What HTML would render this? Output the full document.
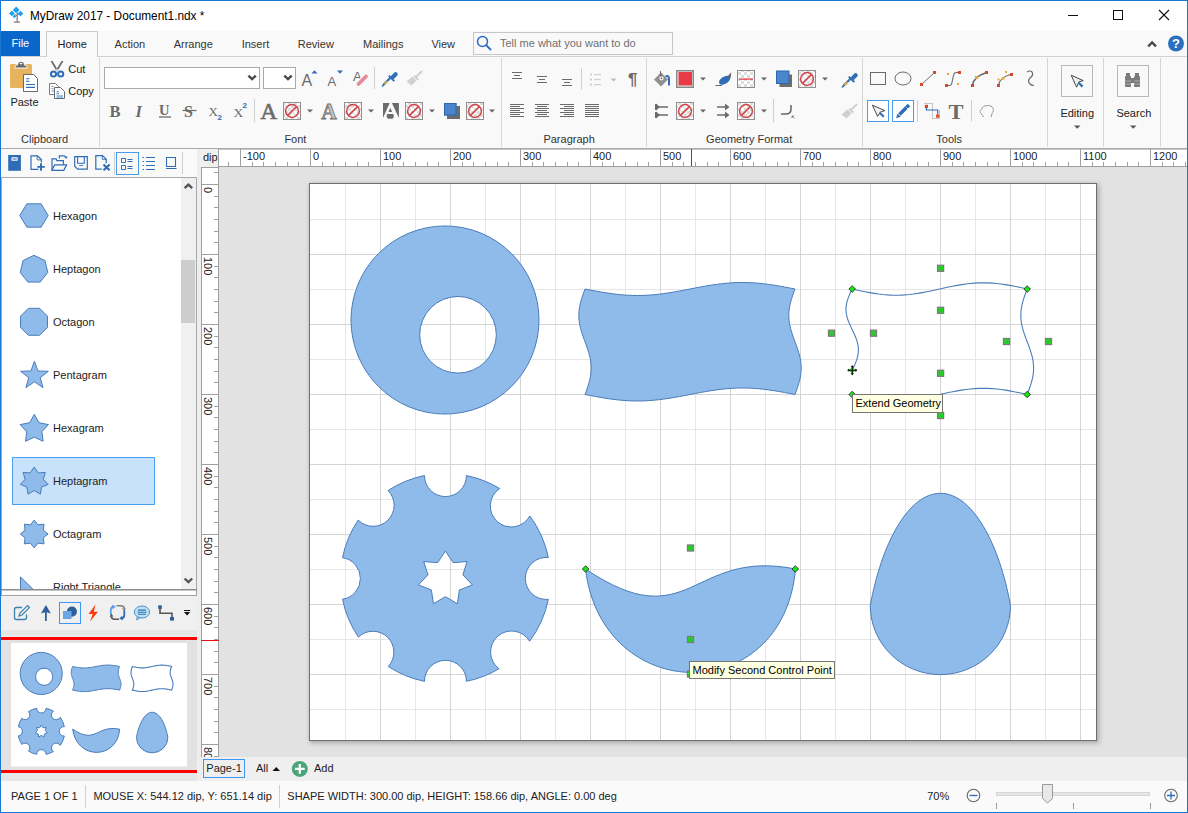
<!DOCTYPE html>
<html><head><meta charset="utf-8"><style>
html,body{margin:0;padding:0;width:1188px;height:813px;overflow:hidden;background:#fff}
svg{font-family:"Liberation Sans",sans-serif}
</style></head><body>
<svg width="1188" height="813" viewBox="0 0 1188 813" font-family="Liberation Sans, sans-serif" style="position:absolute;left:0;top:0">
<defs><filter id="sh" x="-5%" y="-5%" width="110%" height="110%"><feGaussianBlur stdDeviation="2.5"/></filter><pattern id="chk" width="6" height="6" patternUnits="userSpaceOnUse"><rect width="6" height="6" fill="#fff"/><rect width="3" height="3" fill="#ddd"/><rect x="3" y="3" width="3" height="3" fill="#ddd"/></pattern><clipPath id="listclip"><rect x="3" y="178" width="178" height="411"/></clipPath></defs>
<rect x="0" y="0" width="1188" height="813" fill="#f9f9f9" />
<rect x="0" y="0" width="1188" height="31" fill="#ffffff" />
<g><path d="M17.2 12.5 V22 M17.2 16 L14.5 14.5 M17.2 15 L19.5 13.5" stroke="#8a8a8a" stroke-width="1.4" fill="none"/><rect x="13.8" y="21.4" width="6.2" height="1.4" fill="#8a8a8a"/><path d="M16.2 6.5 l3.4 3.4 -3.4 3.4 -3.4 -3.4z" fill="#1ea0f0"/><path d="M11.9 10.6 l2.8 2.8 -2.8 2.8 -2.8 -2.8z" fill="#1ea0f0"/><path d="M20.5 10.8 l2.8 2.8 -2.8 2.8 -2.8 -2.8z" fill="#1ea0f0"/><path d="M14.4 14.8 l1.7 1.7 -1.7 1.7 -1.7 -1.7z" fill="#1ea0f0"/></g>
<text x="30" y="20" font-size="11.85" fill="#000" >MyDraw 2017 - Document1.ndx *</text>
<line x1="1068" y1="15.5" x2="1078" y2="15.5" stroke="#111" stroke-width="1"/>
<rect x="1113.5" y="10.5" width="9" height="9" fill="none" stroke="#111" stroke-width="1"/>
<path d="M1159 10 L1169 20 M1169 10 L1159 20" stroke="#111" stroke-width="1.1"/>
<rect x="1" y="31" width="1186" height="25" fill="#f9f9f9" />
<line x1="1" y1="56.5" x2="1187" y2="56.5" stroke="#d2d2d2" stroke-width="1" />
<rect x="1" y="31" width="39" height="25" fill="#0b66cc" />
<text x="11.5" y="47" font-size="11" fill="#fff" >File</text>
<path d="M46.5 57 V31.5 H97.5 V57" fill="#f9f9f9" stroke="#c9c9c9" stroke-width="1"/>
<text x="57.5" y="48" font-size="11" fill="#222" >Home</text>
<text x="114.6" y="48" font-size="11" fill="#333" >Action</text>
<text x="173.7" y="48" font-size="11" fill="#333" >Arrange</text>
<text x="241.7" y="48" font-size="11" fill="#333" >Insert</text>
<text x="297.8" y="48" font-size="11" fill="#333" >Review</text>
<text x="363.1" y="48" font-size="11" fill="#333" >Mailings</text>
<text x="431.4" y="48" font-size="11" fill="#333" >View</text>
<rect x="473.5" y="32.5" width="199" height="22" fill="#f9f9f9" stroke="#c6c6c6" stroke-width="1" />
<circle cx="482.5" cy="41.5" r="5" fill="none" stroke="#2b6cc0" stroke-width="1.5"/>
<line x1="486" y1="45" x2="491" y2="50" stroke="#2b6cc0" stroke-width="1.8"/>
<text x="500" y="47" font-size="11" fill="#707070" >Tell me what you want to do</text>
<path d="M1148.2 46.4 L1152.1 42.4 L1156 46.4" fill="none" stroke="#4a4a4a" stroke-width="2.4"/>
<circle cx="1176" cy="43.5" r="8" fill="#2a6fc0"/>
<text x="1176" y="48.3" font-size="13" font-weight="bold" fill="#fff" text-anchor="middle">?</text>
<rect x="1" y="57" width="1186" height="91" fill="#f9f9f9" />
<line x1="1" y1="148.5" x2="1187" y2="148.5" stroke="#a8a8a8" stroke-width="1" />
<line x1="99.5" y1="58" x2="99.5" y2="147" stroke="#d6d6d6" stroke-width="1" />
<line x1="501.5" y1="58" x2="501.5" y2="147" stroke="#d6d6d6" stroke-width="1" />
<line x1="646.5" y1="58" x2="646.5" y2="147" stroke="#d6d6d6" stroke-width="1" />
<line x1="862.5" y1="58" x2="862.5" y2="147" stroke="#d6d6d6" stroke-width="1" />
<line x1="1047.5" y1="58" x2="1047.5" y2="147" stroke="#d6d6d6" stroke-width="1" />
<line x1="1103.5" y1="58" x2="1103.5" y2="147" stroke="#d6d6d6" stroke-width="1" />
<line x1="1160.5" y1="58" x2="1160.5" y2="147" stroke="#d6d6d6" stroke-width="1" />
<text x="21" y="143" font-size="11" fill="#333" >Clipboard</text>
<text x="284.4" y="143" font-size="11" fill="#333" >Font</text>
<text x="543.4" y="143" font-size="11" fill="#333" >Paragraph</text>
<text x="706.1" y="143" font-size="11" fill="#333" >Geometry Format</text>
<text x="936.3" y="143" font-size="11" fill="#333" >Tools</text>
<rect x="10" y="64" width="22" height="24" rx="1.5" fill="#e8b35f"/>
<path d="M14 68.4 L15.8 64.6 H17.2 L18 61.8 Q21 60.2 24 61.8 L24.8 64.6 H26.2 L28 68.4z" fill="#f9f9f9"/>
<path d="M15 67.6 L16.4 65.4 H25.6 L27 67.6z M17.8 65.6 L18.7 62.5 Q21 61.2 23.3 62.5 L24.2 65.6z" fill="#6a6a6a"/>
<ellipse cx="21" cy="63.6" rx="1.3" ry="0.8" fill="#f9f9f9"/>
<path d="M23.5 74.5 h10 l4 4 v13 h-14z" fill="#fff" stroke="#6a6a6a" stroke-width="1"/>
<path d="M26 78.8 h3.5 M26 81.3 h3.5 M26 84.5 h9 M26 87.4 h9" stroke="#2f6db6" stroke-width="1.1"/>
<text x="10.4" y="105.5" font-size="11" fill="#222" >Paste</text>
<path d="M50.5 61 L52.5 61 L58 70 L56.5 71z M63.5 61 L61.5 61 L56 70 L57.5 71z" fill="#6a6a6a"/>
<circle cx="53.5" cy="74" r="2.6" fill="none" stroke="#2f6db6" stroke-width="2"/>
<circle cx="60.7" cy="74" r="2.6" fill="none" stroke="#2f6db6" stroke-width="2"/>
<text x="68.2" y="73" font-size="11" fill="#222" >Cut</text>
<path d="M49.5 83.5 h6 l3 3 v8 h-9z" fill="#fff" stroke="#7a7a7a" stroke-width="1"/>
<path d="M54.5 87.5 h6 l4 4 v7 h-10z" fill="#fff" stroke="#6a6a6a" stroke-width="1"/>
<path d="M56.5 91.8 h2.5 M56.5 93.8 h2.5 M56.5 96 h6.5 M56.5 98 h6.5" stroke="#2f6db6" stroke-width="0.9"/>
<path d="M51.5 86.5 h2 M51.5 88.7 h2 M51.5 91 h3" stroke="#3a78c4" stroke-width="0.8"/>
<text x="68.2" y="95" font-size="11" fill="#222" >Copy</text>
<rect x="104.5" y="67.5" width="155" height="21" fill="#fff" stroke="#a9a9a9" stroke-width="1" />
<path d="M248.4 75.6 l3.7 3.6 3.7 -3.6" fill="none" stroke="#4a4a4a" stroke-width="2.4"/>
<rect x="263.5" y="67.5" width="32" height="21" fill="#fff" stroke="#a9a9a9" stroke-width="1" />
<path d="M284.3 75.6 l3.7 3.6 3.7 -3.6" fill="none" stroke="#4a4a4a" stroke-width="2.4"/>
<text x="301.5" y="86" font-size="16" fill="#6b6b6b">A</text>
<path d="M311.5 73.5 l3 -3.2 3 3.2z" fill="#2f6db6"/>
<text x="327.5" y="86" font-size="13" fill="#6b6b6b">A</text>
<path d="M337 70.5 h6 l-3 3.3z" fill="#2f6db6"/>
<text x="353" y="80.7" font-size="13" fill="#6b6b6b">A</text>
<path d="M358.5 84 L366 76.5" stroke="#f9f9f9" stroke-width="6" stroke-linecap="round"/>
<path d="M358.5 84 L366 76.5" stroke="#e8899a" stroke-width="3.8" stroke-linecap="round"/>
<line x1="374.5" y1="67" x2="374.5" y2="89" stroke="#cfcfcf" stroke-width="1" />
<g transform="translate(381,70)"><path d="M9.6 6.4 L13.2 2.8 a2 2 0 0 1 2.9 2.9 L12.5 9.3z" fill="#2f6db6"/><path d="M7.8 5.6 L13.3 11.1" stroke="#2f6db6" stroke-width="2"/><path d="M9.6 8.3 L3.2 14.7 L1.2 16.2 L2.6 13.8 L9 7.4z" fill="#fff" stroke="#2f6db6" stroke-width="1.1" stroke-linejoin="round"/><path d="M3 13.6 L6 10.6 L7.4 12 L4.4 15z" fill="#e9b050"/></g>
<g transform="translate(406,70)"><path d="M15.5 1.5 L11 6" stroke="#d0d0d0" stroke-width="2" stroke-linecap="round"/><path d="M9 5 l4 4 -1.5 1.5 -4 -4z" fill="#d0d0d0"/><path d="M6.5 6.5 l4 4 -5 5 -5 -4 z" fill="#d0d0d0"/></g>
<text x="109.5" y="117" font-size="16.5" font-weight="bold" fill="#6b6b6b" font-family="Liberation Serif">B</text>
<text x="135.5" y="117" font-size="16.5" font-weight="bold" font-style="italic" fill="#6b6b6b" font-family="Liberation Serif">I</text>
<text x="159" y="115" font-size="14.5" font-weight="bold" fill="#6b6b6b" font-family="Liberation Serif">U</text>
<line x1="159" y1="117" x2="171" y2="117" stroke="#6b6b6b" stroke-width="1.3" />
<text x="184" y="117" font-size="16" font-weight="bold" fill="#6b6b6b" font-family="Liberation Serif">S</text>
<line x1="182.5" y1="110.5" x2="196.5" y2="110.5" stroke="#6b6b6b" stroke-width="1.2" />
<text x="208.5" y="115.5" font-size="13" fill="#6b6b6b" font-family="Liberation Serif">X</text>
<text x="217.5" y="119.5" font-size="8" font-weight="bold" fill="#2f6db6">2</text>
<text x="233.5" y="117" font-size="13.5" fill="#6b6b6b" font-family="Liberation Serif">X</text>
<text x="242.5" y="108" font-size="8" font-weight="bold" fill="#2f6db6">2</text>
<line x1="254.5" y1="99" x2="254.5" y2="122" stroke="#cfcfcf" stroke-width="1" />
<text x="260.3" y="119" font-size="23" fill="#6b6b6b" font-family="Liberation Serif" textLength="17" lengthAdjust="spacingAndGlyphs" stroke="#6b6b6b" stroke-width="0.6">A</text>
<text x="321.3" y="119" font-size="23" font-weight="bold" fill="#c4c4c4" stroke="#6b6b6b" stroke-width="0.8" font-family="Liberation Serif" textLength="15.5" lengthAdjust="spacingAndGlyphs">A</text>
<path d="M383 103 H389.7 L383 117.9z M391.9 103 H398.9 V117.9z M390.3 107.8 L388.4 111.9 H392.1z" fill="#6b6b6b"/>
<path d="M387 114 H393.3 L393.9 116.8 L392.6 118.7 H387.9 L386.6 116.8z" fill="#6b6b6b"/>
<rect x="447" y="106" width="13" height="13" fill="#6b6b6b"/>
<rect x="444" y="103" width="12.5" height="12.5" fill="#4a86cc"/>
<rect x="444.5" y="103.5" width="11.5" height="11.5" fill="none" stroke="#2d66ad" stroke-width="1"/>
<rect x="283.5" y="102.5" width="17" height="17" fill="url(#chk)" stroke="#909090"/>
<circle cx="292" cy="111" r="6.4" fill="none" stroke="#d0454b" stroke-width="1.5"/>
<line x1="287.6" y1="115.4" x2="296.4" y2="106.6" stroke="#d0454b" stroke-width="1.5"/>
<rect x="344.5" y="102.5" width="17" height="17" fill="url(#chk)" stroke="#909090"/>
<circle cx="353" cy="111" r="6.4" fill="none" stroke="#d0454b" stroke-width="1.5"/>
<line x1="348.6" y1="115.4" x2="357.4" y2="106.6" stroke="#d0454b" stroke-width="1.5"/>
<rect x="405.5" y="102.5" width="17" height="17" fill="url(#chk)" stroke="#909090"/>
<circle cx="414" cy="111" r="6.4" fill="none" stroke="#d0454b" stroke-width="1.5"/>
<line x1="409.6" y1="115.4" x2="418.4" y2="106.6" stroke="#d0454b" stroke-width="1.5"/>
<rect x="466.5" y="102.5" width="17" height="17" fill="url(#chk)" stroke="#909090"/>
<circle cx="475" cy="111" r="6.4" fill="none" stroke="#d0454b" stroke-width="1.5"/>
<line x1="470.6" y1="115.4" x2="479.4" y2="106.6" stroke="#d0454b" stroke-width="1.5"/>
<path d="M307 109.5 h6 l-3 3z" fill="#666"/>
<path d="M368 109.5 h6 l-3 3z" fill="#666"/>
<path d="M429 109.5 h6 l-3 3z" fill="#666"/>
<path d="M489 109.5 h6 l-3 3z" fill="#666"/>
<rect x="512" y="72" width="10" height="1" fill="#6b6b6b"/>
<rect x="514" y="75" width="6" height="1" fill="#6b6b6b"/>
<rect x="512" y="78" width="10" height="1" fill="#6b6b6b"/>
<rect x="537" y="76" width="10" height="1" fill="#6b6b6b"/>
<rect x="539" y="79" width="6" height="1" fill="#6b6b6b"/>
<rect x="537" y="82" width="10" height="1" fill="#6b6b6b"/>
<rect x="562" y="79" width="10" height="1" fill="#6b6b6b"/>
<rect x="564" y="82" width="6" height="1" fill="#6b6b6b"/>
<rect x="562" y="85" width="10" height="1" fill="#6b6b6b"/>
<line x1="581.5" y1="68" x2="581.5" y2="89.5" stroke="#cfcfcf" stroke-width="1" />
<rect x="590" y="73.5" width="2" height="2" fill="#d0d0d0"/>
<rect x="594" y="74" width="7" height="1.2" fill="#d0d0d0"/>
<rect x="590" y="78.5" width="2" height="2" fill="#d0d0d0"/>
<rect x="594" y="79" width="7" height="1.2" fill="#d0d0d0"/>
<rect x="590" y="83.5" width="2" height="2" fill="#d0d0d0"/>
<rect x="594" y="84" width="7" height="1.2" fill="#d0d0d0"/>
<path d="M610.5 78.5 h6 l-3 3z" fill="#bdbdbd"/>
<text x="628" y="85" font-size="17" font-weight="bold" fill="#6b6b6b">¶</text>
<rect x="510" y="104" width="14" height="1" fill="#6b6b6b"/>
<rect x="510" y="106" width="10" height="1" fill="#6b6b6b"/>
<rect x="510" y="108" width="14" height="1" fill="#6b6b6b"/>
<rect x="510" y="110" width="10" height="1" fill="#6b6b6b"/>
<rect x="510" y="112" width="14" height="1" fill="#6b6b6b"/>
<rect x="510" y="114" width="10" height="1" fill="#6b6b6b"/>
<rect x="510" y="116" width="14" height="1" fill="#6b6b6b"/>
<rect x="535" y="104" width="14" height="1" fill="#6b6b6b"/>
<rect x="537" y="106" width="10" height="1" fill="#6b6b6b"/>
<rect x="535" y="108" width="14" height="1" fill="#6b6b6b"/>
<rect x="537" y="110" width="10" height="1" fill="#6b6b6b"/>
<rect x="535" y="112" width="14" height="1" fill="#6b6b6b"/>
<rect x="537" y="114" width="10" height="1" fill="#6b6b6b"/>
<rect x="535" y="116" width="14" height="1" fill="#6b6b6b"/>
<rect x="560" y="104" width="14" height="1" fill="#6b6b6b"/>
<rect x="564" y="106" width="10" height="1" fill="#6b6b6b"/>
<rect x="560" y="108" width="14" height="1" fill="#6b6b6b"/>
<rect x="564" y="110" width="10" height="1" fill="#6b6b6b"/>
<rect x="560" y="112" width="14" height="1" fill="#6b6b6b"/>
<rect x="564" y="114" width="10" height="1" fill="#6b6b6b"/>
<rect x="560" y="116" width="14" height="1" fill="#6b6b6b"/>
<rect x="585" y="104" width="14" height="1" fill="#6b6b6b"/>
<rect x="585" y="106" width="14" height="1" fill="#6b6b6b"/>
<rect x="585" y="108" width="14" height="1" fill="#6b6b6b"/>
<rect x="585" y="110" width="14" height="1" fill="#6b6b6b"/>
<rect x="585" y="112" width="14" height="1" fill="#6b6b6b"/>
<rect x="585" y="114" width="14" height="1" fill="#6b6b6b"/>
<rect x="585" y="116" width="14" height="1" fill="#6b6b6b"/>
<path d="M654 79.5 L661 72.5 L668 79.5 L661 86.5z" fill="#8f8f8f"/>
<circle cx="661.5" cy="78.3" r="1.5" fill="#555" stroke="#fff" stroke-width="1.2"/>
<path d="M660.3 71 L661 76.5" stroke="#555" stroke-width="0.9"/>
<path d="M665.5 76.5 q3.5 -1.5 3.5 2.5 v6.5" fill="none" stroke="#2f6db6" stroke-width="2"/>
<rect x="676.75" y="70.75" width="16.5" height="16.5" fill="#f0f0f0" stroke="#888" stroke-width="1.5"/>
<rect x="678.5" y="72" width="13.5" height="13.5" fill="#e83a44"/>
<path d="M700 77.5 h6 l-3 3z" fill="#666"/>
<ellipse cx="724.6" cy="80.2" rx="6.2" ry="3.6" transform="rotate(-32 724.6 80.2)" fill="#2f6db6"/>
<path d="M727.5 76.5 L731.3 72.3 L730.6 78.2z" fill="#666"/>
<rect x="715.5" y="85" width="6.5" height="1" fill="#6b6b6b"/>
<rect x="737.5" y="70.5" width="17" height="17" fill="url(#chk)" stroke="#8a8a8a"/>
<rect x="739" y="78.5" width="14" height="1.3" fill="#e84148"/>
<path d="M761 77.5 h6 l-3 3z" fill="#666"/>
<rect x="779.5" y="74.5" width="12.5" height="12.5" fill="#6e6e6e"/>
<rect x="776.5" y="71" width="12.5" height="12.5" fill="#4a86cc" stroke="#2d66ad" stroke-width="1"/>
<rect x="798.5" y="70.5" width="17" height="17" fill="url(#chk)" stroke="#909090"/>
<circle cx="807" cy="79" r="6.4" fill="none" stroke="#d0454b" stroke-width="1.5"/>
<line x1="802.6" y1="83.4" x2="811.4" y2="74.6" stroke="#d0454b" stroke-width="1.5"/>
<path d="M822 77.5 h6 l-3 3z" fill="#666"/>
<g transform="translate(841,71)"><path d="M9.6 6.4 L13.2 2.8 a2 2 0 0 1 2.9 2.9 L12.5 9.3z" fill="#2f6db6"/><path d="M7.8 5.6 L13.3 11.1" stroke="#2f6db6" stroke-width="2"/><path d="M9.6 8.3 L3.2 14.7 L1.2 16.2 L2.6 13.8 L9 7.4z" fill="#fff" stroke="#2f6db6" stroke-width="1.1" stroke-linejoin="round"/><path d="M3 13.6 L6 10.6 L7.4 12 L4.4 15z" fill="#e9b050"/></g>
<path d="M656 104 v6 M656 112 v6" stroke="#6b6b6b" stroke-width="2"/>
<path d="M656 107 h12 M656 115 h12" stroke="#6b6b6b" stroke-width="1.5"/>
<path d="M656 103.5 l4 3.5 -4 3.5z M656 111.5 l4 3.5 -4 3.5z" fill="#6b6b6b"/>
<rect x="676.5" y="102.5" width="17" height="17" fill="url(#chk)" stroke="#909090"/>
<circle cx="685" cy="111" r="6.4" fill="none" stroke="#d0454b" stroke-width="1.5"/>
<line x1="680.6" y1="115.4" x2="689.4" y2="106.6" stroke="#d0454b" stroke-width="1.5"/>
<path d="M700 109.5 h6 l-3 3z" fill="#666"/>
<path d="M717 107 h11 M717 115 h11" stroke="#6b6b6b" stroke-width="1.5"/>
<path d="M725 103.5 l4.5 3.5 -4.5 3.5z M725 111.5 l4.5 3.5 -4.5 3.5z" fill="#6b6b6b"/>
<rect x="737.5" y="102.5" width="17" height="17" fill="url(#chk)" stroke="#909090"/>
<circle cx="746" cy="111" r="6.4" fill="none" stroke="#d0454b" stroke-width="1.5"/>
<line x1="741.6" y1="115.4" x2="750.4" y2="106.6" stroke="#d0454b" stroke-width="1.5"/>
<path d="M761 109.5 h6 l-3 3z" fill="#666"/>
<line x1="773.5" y1="99" x2="773.5" y2="122.5" stroke="#cfcfcf" stroke-width="1" />
<path d="M781 114 h5 q5 0 5 -5 v-4" fill="none" stroke="#6b6b6b" stroke-width="1.6"/>
<path d="M792 116 l2.5 2.5 M792 116 v2 M792 116 h2" stroke="#6b6b6b" stroke-width="0.8"/>
<g transform="translate(841,103)"><path d="M15.5 1.5 L11 6" stroke="#d0d0d0" stroke-width="2" stroke-linecap="round"/><path d="M9 5 l4 4 -1.5 1.5 -4 -4z" fill="#d0d0d0"/><path d="M6.5 6.5 l4 4 -5 5 -5 -4 z" fill="#d0d0d0"/></g>
<rect x="870.5" y="72.5" width="15" height="12" fill="none" stroke="#6b6b6b" stroke-width="1" />
<ellipse cx="903" cy="78.5" rx="8" ry="6.5" fill="none" stroke="#6b6b6b"/>
<path d="M921.5 84.5 L934 73" stroke="#6b6b6b" stroke-width="1"/>
<rect x="920" y="83" width="3" height="3" fill="#d24a2a"/><rect x="933" y="71" width="3" height="3" fill="#d24a2a"/>
<path d="M946.5 85.5 h3 q2 0 2.5 -3 l1.5 -7 q0.5 -3 3 -3 h3" fill="none" stroke="#6b6b6b" stroke-width="1.1"/>
<rect x="945" y="84" width="3" height="3" fill="#d24a2a"/><rect x="958" y="71" width="3" height="3" fill="#d24a2a"/>
<rect x="947" y="73" width="2" height="2" fill="#e8a838"/><rect x="957" y="83" width="2" height="2" fill="#e8a838"/>
<path d="M972.5 85.5 q1 -9 13 -12.5" fill="none" stroke="#6b6b6b" stroke-width="1.8"/>
<rect x="971" y="84" width="3" height="3" fill="#d24a2a"/><rect x="985" y="71" width="3" height="3" fill="#d24a2a"/>
<rect x="975" y="76" width="3" height="3" fill="#e8a838"/>
<path d="M998.5 85.5 q1 -8 12 -11" fill="none" stroke="#6b6b6b" stroke-width="1.2"/>
<rect x="997" y="84" width="3" height="3" fill="#d24a2a"/><rect x="1010" y="73" width="3" height="3" fill="#d24a2a"/>
<rect x="1002" y="77" width="2.6" height="2.6" fill="#e8a838"/><rect x="997.5" y="78.5" width="2" height="2" fill="#e8a838"/><rect x="1005" y="71" width="2" height="2" fill="#e8a838"/>
<path d="M1027 72 q3 -2 5 0 q2 3 -2 6 q-3 3 0 6 q2 2 4 1" fill="none" stroke="#6b6b6b" stroke-width="1.2"/>
<rect x="867.5" y="100.5" width="21" height="21" fill="#fff" stroke="#4a9bea" stroke-width="1" />
<rect x="892.5" y="100.5" width="21" height="21" fill="#fff" stroke="#4a9bea" stroke-width="1" />
<path d="M872.4 105.2 L884.9 110.6 L880.3 112 L877.6 116.4z" fill="#eef3f8" stroke="#333" stroke-width="0.9" stroke-linejoin="round"/>
<path d="M880 113 L883.8 116.8" stroke="#2f6db6" stroke-width="2.2"/>
<path d="M899.5 114.5 L909 105" stroke="#2f6db6" stroke-width="3.6"/>
<path d="M896 118.3 l1.6 -4.8 3.2 3.2z" fill="#2f6db6"/>
<path d="M906.5 107.5 l2 2" stroke="#fff" stroke-width="0.8"/>
<line x1="917.5" y1="100" x2="917.5" y2="121.5" stroke="#cfcfcf" stroke-width="1" />
<path d="M924.5 103.5 H932.5 V118.5 H939.5 V110" fill="none" stroke="#777" stroke-width="0.8" stroke-dasharray="1,1"/>
<path d="M926.4 107 V110 H937.7 V114.5" fill="none" stroke="#2f6db6" stroke-width="1.2"/>
<rect x="924.8" y="104.8" width="3.2" height="3.2" fill="#d24a2a"/><rect x="936.1" y="114.5" width="3.2" height="3.2" fill="#d24a2a"/>
<text x="948.6" y="119" font-size="22" font-weight="bold" fill="#6b6b6b" font-family="Liberation Serif" textLength="15" lengthAdjust="spacingAndGlyphs">T</text>
<line x1="971.5" y1="100" x2="971.5" y2="121.5" stroke="#cfcfcf" stroke-width="1" />
<path d="M983.5 117 L980.5 112.5 Q979.5 110.5 981.5 109.5 L983 106.8 Q984.5 105.3 986.5 106 Q988.5 104.8 990.3 106.2 Q992.5 106 993 108.5 Q994 111 992 113.5 L991.2 117" fill="none" stroke="#6b6b6b" stroke-width="0.9" stroke-dasharray="1.6,0.6"/>
<rect x="1061.5" y="65.5" width="31" height="31" fill="#f9f9f9" stroke="#b8b8b8" stroke-width="1" />
<path d="M1071.2 75.2 L1083.2 80.6 L1078.9 81.9 L1076.6 87.2z" fill="#eef3f8" stroke="#333" stroke-width="0.9" stroke-linejoin="round"/>
<path d="M1078.6 82.8 L1082.6 86.6" stroke="#2f6db6" stroke-width="2.2"/>
<text x="1060.4" y="117" font-size="11" fill="#222" >Editing</text>
<path d="M1074 125.5 h6.5 l-3.25 3.2z" fill="#555"/>
<rect x="1117.5" y="65.5" width="31" height="31" fill="#f9f9f9" stroke="#b8b8b8" stroke-width="1" />
<g fill="#7a7a7a"><rect x="1126" y="73" width="4" height="3"/><rect x="1135" y="73" width="4" height="3"/><rect x="1125" y="76" width="6" height="11" rx="1"/><rect x="1134" y="76" width="6" height="11" rx="1"/><rect x="1130" y="78" width="5" height="5"/></g><path d="M1125 81 h6 M1134 81 h6 M1125 84 h6 M1134 84 h6" stroke="#bbb" stroke-width="0.8"/>
<text x="1116.4" y="117" font-size="11" fill="#222" >Search</text>
<path d="M1130 125.5 h6.5 l-3.25 3.2z" fill="#555"/>
<rect x="197" y="149" width="990" height="608" fill="#e2e2e2" />
<rect x="197" y="149" width="4" height="608" fill="#eeeeee" />
<rect x="201" y="149" width="18" height="18" fill="#f0f0f0" />
<text x="203" y="161" font-size="11" fill="#222" >dip</text>
<rect x="219" y="149" width="968" height="17" fill="#fff" />
<line x1="219" y1="166.5" x2="1187" y2="166.5" stroke="#a0a0a0" stroke-width="1" />
<line x1="219" y1="149.5" x2="1187" y2="149.5" stroke="#c8c8c8" stroke-width="1" />
<line x1="218.5" y1="149" x2="218.5" y2="167" stroke="#a0a0a0" stroke-width="1" />
<line x1="228.5" y1="162" x2="228.5" y2="166" stroke="#a0a0a0" stroke-width="1" />
<line x1="240.5" y1="149" x2="240.5" y2="166" stroke="#a0a0a0" stroke-width="1" />
<text x="243" y="160" font-size="11" fill="#222" >-100</text>
<line x1="252.5" y1="162" x2="252.5" y2="166" stroke="#a0a0a0" stroke-width="1" />
<line x1="263.5" y1="162" x2="263.5" y2="166" stroke="#a0a0a0" stroke-width="1" />
<line x1="275.5" y1="162" x2="275.5" y2="166" stroke="#a0a0a0" stroke-width="1" />
<line x1="287.5" y1="162" x2="287.5" y2="166" stroke="#a0a0a0" stroke-width="1" />
<line x1="298.5" y1="162" x2="298.5" y2="166" stroke="#a0a0a0" stroke-width="1" />
<line x1="310.5" y1="149" x2="310.5" y2="166" stroke="#a0a0a0" stroke-width="1" />
<text x="313" y="160" font-size="11" fill="#222" >0</text>
<line x1="322.5" y1="162" x2="322.5" y2="166" stroke="#a0a0a0" stroke-width="1" />
<line x1="333.5" y1="162" x2="333.5" y2="166" stroke="#a0a0a0" stroke-width="1" />
<line x1="345.5" y1="162" x2="345.5" y2="166" stroke="#a0a0a0" stroke-width="1" />
<line x1="357.5" y1="162" x2="357.5" y2="166" stroke="#a0a0a0" stroke-width="1" />
<line x1="368.5" y1="162" x2="368.5" y2="166" stroke="#a0a0a0" stroke-width="1" />
<line x1="380.5" y1="149" x2="380.5" y2="166" stroke="#a0a0a0" stroke-width="1" />
<text x="383" y="160" font-size="11" fill="#222" >100</text>
<line x1="392.5" y1="162" x2="392.5" y2="166" stroke="#a0a0a0" stroke-width="1" />
<line x1="403.5" y1="162" x2="403.5" y2="166" stroke="#a0a0a0" stroke-width="1" />
<line x1="415.5" y1="162" x2="415.5" y2="166" stroke="#a0a0a0" stroke-width="1" />
<line x1="427.5" y1="162" x2="427.5" y2="166" stroke="#a0a0a0" stroke-width="1" />
<line x1="438.5" y1="162" x2="438.5" y2="166" stroke="#a0a0a0" stroke-width="1" />
<line x1="450.5" y1="149" x2="450.5" y2="166" stroke="#a0a0a0" stroke-width="1" />
<text x="453" y="160" font-size="11" fill="#222" >200</text>
<line x1="462.5" y1="162" x2="462.5" y2="166" stroke="#a0a0a0" stroke-width="1" />
<line x1="473.5" y1="162" x2="473.5" y2="166" stroke="#a0a0a0" stroke-width="1" />
<line x1="485.5" y1="162" x2="485.5" y2="166" stroke="#a0a0a0" stroke-width="1" />
<line x1="497.5" y1="162" x2="497.5" y2="166" stroke="#a0a0a0" stroke-width="1" />
<line x1="508.5" y1="162" x2="508.5" y2="166" stroke="#a0a0a0" stroke-width="1" />
<line x1="520.5" y1="149" x2="520.5" y2="166" stroke="#a0a0a0" stroke-width="1" />
<text x="523" y="160" font-size="11" fill="#222" >300</text>
<line x1="532.5" y1="162" x2="532.5" y2="166" stroke="#a0a0a0" stroke-width="1" />
<line x1="543.5" y1="162" x2="543.5" y2="166" stroke="#a0a0a0" stroke-width="1" />
<line x1="555.5" y1="162" x2="555.5" y2="166" stroke="#a0a0a0" stroke-width="1" />
<line x1="567.5" y1="162" x2="567.5" y2="166" stroke="#a0a0a0" stroke-width="1" />
<line x1="578.5" y1="162" x2="578.5" y2="166" stroke="#a0a0a0" stroke-width="1" />
<line x1="590.5" y1="149" x2="590.5" y2="166" stroke="#a0a0a0" stroke-width="1" />
<text x="593" y="160" font-size="11" fill="#222" >400</text>
<line x1="602.5" y1="162" x2="602.5" y2="166" stroke="#a0a0a0" stroke-width="1" />
<line x1="613.5" y1="162" x2="613.5" y2="166" stroke="#a0a0a0" stroke-width="1" />
<line x1="625.5" y1="162" x2="625.5" y2="166" stroke="#a0a0a0" stroke-width="1" />
<line x1="637.5" y1="162" x2="637.5" y2="166" stroke="#a0a0a0" stroke-width="1" />
<line x1="648.5" y1="162" x2="648.5" y2="166" stroke="#a0a0a0" stroke-width="1" />
<line x1="660.5" y1="149" x2="660.5" y2="166" stroke="#a0a0a0" stroke-width="1" />
<text x="663" y="160" font-size="11" fill="#222" >500</text>
<line x1="672.5" y1="162" x2="672.5" y2="166" stroke="#a0a0a0" stroke-width="1" />
<line x1="683.5" y1="162" x2="683.5" y2="166" stroke="#a0a0a0" stroke-width="1" />
<line x1="695.5" y1="162" x2="695.5" y2="166" stroke="#a0a0a0" stroke-width="1" />
<line x1="707.5" y1="162" x2="707.5" y2="166" stroke="#a0a0a0" stroke-width="1" />
<line x1="718.5" y1="162" x2="718.5" y2="166" stroke="#a0a0a0" stroke-width="1" />
<line x1="730.5" y1="149" x2="730.5" y2="166" stroke="#a0a0a0" stroke-width="1" />
<text x="733" y="160" font-size="11" fill="#222" >600</text>
<line x1="742.5" y1="162" x2="742.5" y2="166" stroke="#a0a0a0" stroke-width="1" />
<line x1="753.5" y1="162" x2="753.5" y2="166" stroke="#a0a0a0" stroke-width="1" />
<line x1="765.5" y1="162" x2="765.5" y2="166" stroke="#a0a0a0" stroke-width="1" />
<line x1="777.5" y1="162" x2="777.5" y2="166" stroke="#a0a0a0" stroke-width="1" />
<line x1="788.5" y1="162" x2="788.5" y2="166" stroke="#a0a0a0" stroke-width="1" />
<line x1="800.5" y1="149" x2="800.5" y2="166" stroke="#a0a0a0" stroke-width="1" />
<text x="803" y="160" font-size="11" fill="#222" >700</text>
<line x1="812.5" y1="162" x2="812.5" y2="166" stroke="#a0a0a0" stroke-width="1" />
<line x1="823.5" y1="162" x2="823.5" y2="166" stroke="#a0a0a0" stroke-width="1" />
<line x1="835.5" y1="162" x2="835.5" y2="166" stroke="#a0a0a0" stroke-width="1" />
<line x1="847.5" y1="162" x2="847.5" y2="166" stroke="#a0a0a0" stroke-width="1" />
<line x1="858.5" y1="162" x2="858.5" y2="166" stroke="#a0a0a0" stroke-width="1" />
<line x1="870.5" y1="149" x2="870.5" y2="166" stroke="#a0a0a0" stroke-width="1" />
<text x="873" y="160" font-size="11" fill="#222" >800</text>
<line x1="882.5" y1="162" x2="882.5" y2="166" stroke="#a0a0a0" stroke-width="1" />
<line x1="893.5" y1="162" x2="893.5" y2="166" stroke="#a0a0a0" stroke-width="1" />
<line x1="905.5" y1="162" x2="905.5" y2="166" stroke="#a0a0a0" stroke-width="1" />
<line x1="917.5" y1="162" x2="917.5" y2="166" stroke="#a0a0a0" stroke-width="1" />
<line x1="928.5" y1="162" x2="928.5" y2="166" stroke="#a0a0a0" stroke-width="1" />
<line x1="940.5" y1="149" x2="940.5" y2="166" stroke="#a0a0a0" stroke-width="1" />
<text x="943" y="160" font-size="11" fill="#222" >900</text>
<line x1="952.5" y1="162" x2="952.5" y2="166" stroke="#a0a0a0" stroke-width="1" />
<line x1="963.5" y1="162" x2="963.5" y2="166" stroke="#a0a0a0" stroke-width="1" />
<line x1="975.5" y1="162" x2="975.5" y2="166" stroke="#a0a0a0" stroke-width="1" />
<line x1="987.5" y1="162" x2="987.5" y2="166" stroke="#a0a0a0" stroke-width="1" />
<line x1="998.5" y1="162" x2="998.5" y2="166" stroke="#a0a0a0" stroke-width="1" />
<line x1="1010.5" y1="149" x2="1010.5" y2="166" stroke="#a0a0a0" stroke-width="1" />
<text x="1013" y="160" font-size="11" fill="#222" >1000</text>
<line x1="1022.5" y1="162" x2="1022.5" y2="166" stroke="#a0a0a0" stroke-width="1" />
<line x1="1033.5" y1="162" x2="1033.5" y2="166" stroke="#a0a0a0" stroke-width="1" />
<line x1="1045.5" y1="162" x2="1045.5" y2="166" stroke="#a0a0a0" stroke-width="1" />
<line x1="1057.5" y1="162" x2="1057.5" y2="166" stroke="#a0a0a0" stroke-width="1" />
<line x1="1068.5" y1="162" x2="1068.5" y2="166" stroke="#a0a0a0" stroke-width="1" />
<line x1="1080.5" y1="149" x2="1080.5" y2="166" stroke="#a0a0a0" stroke-width="1" />
<text x="1083" y="160" font-size="11" fill="#222" >1100</text>
<line x1="1092.5" y1="162" x2="1092.5" y2="166" stroke="#a0a0a0" stroke-width="1" />
<line x1="1103.5" y1="162" x2="1103.5" y2="166" stroke="#a0a0a0" stroke-width="1" />
<line x1="1115.5" y1="162" x2="1115.5" y2="166" stroke="#a0a0a0" stroke-width="1" />
<line x1="1127.5" y1="162" x2="1127.5" y2="166" stroke="#a0a0a0" stroke-width="1" />
<line x1="1138.5" y1="162" x2="1138.5" y2="166" stroke="#a0a0a0" stroke-width="1" />
<line x1="1150.5" y1="149" x2="1150.5" y2="166" stroke="#a0a0a0" stroke-width="1" />
<text x="1153" y="160" font-size="11" fill="#222" >1200</text>
<line x1="1162.5" y1="162" x2="1162.5" y2="166" stroke="#a0a0a0" stroke-width="1" />
<line x1="1173.5" y1="162" x2="1173.5" y2="166" stroke="#a0a0a0" stroke-width="1" />
<line x1="1185.5" y1="162" x2="1185.5" y2="166" stroke="#a0a0a0" stroke-width="1" />
<line x1="691.5" y1="149" x2="691.5" y2="166" stroke="#e81010" stroke-width="1" />
<rect x="201.5" y="167.5" width="17" height="600" fill="#fff" stroke="#a0a0a0" stroke-width="1" />
<line x1="214" y1="172.5" x2="218" y2="172.5" stroke="#a0a0a0" stroke-width="1" />
<line x1="201" y1="184.5" x2="219" y2="184.5" stroke="#a0a0a0" stroke-width="1" />
<text transform="translate(204,187) rotate(90)" font-size="11" fill="#222">0</text>
<line x1="214" y1="196.5" x2="218" y2="196.5" stroke="#a0a0a0" stroke-width="1" />
<line x1="214" y1="207.5" x2="218" y2="207.5" stroke="#a0a0a0" stroke-width="1" />
<line x1="214" y1="219.5" x2="218" y2="219.5" stroke="#a0a0a0" stroke-width="1" />
<line x1="214" y1="231.5" x2="218" y2="231.5" stroke="#a0a0a0" stroke-width="1" />
<line x1="214" y1="242.5" x2="218" y2="242.5" stroke="#a0a0a0" stroke-width="1" />
<line x1="201" y1="254.5" x2="219" y2="254.5" stroke="#a0a0a0" stroke-width="1" />
<text transform="translate(204,257) rotate(90)" font-size="11" fill="#222">100</text>
<line x1="214" y1="266.5" x2="218" y2="266.5" stroke="#a0a0a0" stroke-width="1" />
<line x1="214" y1="277.5" x2="218" y2="277.5" stroke="#a0a0a0" stroke-width="1" />
<line x1="214" y1="289.5" x2="218" y2="289.5" stroke="#a0a0a0" stroke-width="1" />
<line x1="214" y1="301.5" x2="218" y2="301.5" stroke="#a0a0a0" stroke-width="1" />
<line x1="214" y1="312.5" x2="218" y2="312.5" stroke="#a0a0a0" stroke-width="1" />
<line x1="201" y1="324.5" x2="219" y2="324.5" stroke="#a0a0a0" stroke-width="1" />
<text transform="translate(204,327) rotate(90)" font-size="11" fill="#222">200</text>
<line x1="214" y1="336.5" x2="218" y2="336.5" stroke="#a0a0a0" stroke-width="1" />
<line x1="214" y1="347.5" x2="218" y2="347.5" stroke="#a0a0a0" stroke-width="1" />
<line x1="214" y1="359.5" x2="218" y2="359.5" stroke="#a0a0a0" stroke-width="1" />
<line x1="214" y1="371.5" x2="218" y2="371.5" stroke="#a0a0a0" stroke-width="1" />
<line x1="214" y1="382.5" x2="218" y2="382.5" stroke="#a0a0a0" stroke-width="1" />
<line x1="201" y1="394.5" x2="219" y2="394.5" stroke="#a0a0a0" stroke-width="1" />
<text transform="translate(204,397) rotate(90)" font-size="11" fill="#222">300</text>
<line x1="214" y1="406.5" x2="218" y2="406.5" stroke="#a0a0a0" stroke-width="1" />
<line x1="214" y1="417.5" x2="218" y2="417.5" stroke="#a0a0a0" stroke-width="1" />
<line x1="214" y1="429.5" x2="218" y2="429.5" stroke="#a0a0a0" stroke-width="1" />
<line x1="214" y1="441.5" x2="218" y2="441.5" stroke="#a0a0a0" stroke-width="1" />
<line x1="214" y1="452.5" x2="218" y2="452.5" stroke="#a0a0a0" stroke-width="1" />
<line x1="201" y1="464.5" x2="219" y2="464.5" stroke="#a0a0a0" stroke-width="1" />
<text transform="translate(204,467) rotate(90)" font-size="11" fill="#222">400</text>
<line x1="214" y1="476.5" x2="218" y2="476.5" stroke="#a0a0a0" stroke-width="1" />
<line x1="214" y1="487.5" x2="218" y2="487.5" stroke="#a0a0a0" stroke-width="1" />
<line x1="214" y1="499.5" x2="218" y2="499.5" stroke="#a0a0a0" stroke-width="1" />
<line x1="214" y1="511.5" x2="218" y2="511.5" stroke="#a0a0a0" stroke-width="1" />
<line x1="214" y1="522.5" x2="218" y2="522.5" stroke="#a0a0a0" stroke-width="1" />
<line x1="201" y1="534.5" x2="219" y2="534.5" stroke="#a0a0a0" stroke-width="1" />
<text transform="translate(204,537) rotate(90)" font-size="11" fill="#222">500</text>
<line x1="214" y1="546.5" x2="218" y2="546.5" stroke="#a0a0a0" stroke-width="1" />
<line x1="214" y1="557.5" x2="218" y2="557.5" stroke="#a0a0a0" stroke-width="1" />
<line x1="214" y1="569.5" x2="218" y2="569.5" stroke="#a0a0a0" stroke-width="1" />
<line x1="214" y1="581.5" x2="218" y2="581.5" stroke="#a0a0a0" stroke-width="1" />
<line x1="214" y1="592.5" x2="218" y2="592.5" stroke="#a0a0a0" stroke-width="1" />
<line x1="201" y1="604.5" x2="219" y2="604.5" stroke="#a0a0a0" stroke-width="1" />
<text transform="translate(204,607) rotate(90)" font-size="11" fill="#222">600</text>
<line x1="214" y1="616.5" x2="218" y2="616.5" stroke="#a0a0a0" stroke-width="1" />
<line x1="214" y1="627.5" x2="218" y2="627.5" stroke="#a0a0a0" stroke-width="1" />
<line x1="214" y1="639.5" x2="218" y2="639.5" stroke="#a0a0a0" stroke-width="1" />
<line x1="214" y1="651.5" x2="218" y2="651.5" stroke="#a0a0a0" stroke-width="1" />
<line x1="214" y1="662.5" x2="218" y2="662.5" stroke="#a0a0a0" stroke-width="1" />
<line x1="201" y1="674.5" x2="219" y2="674.5" stroke="#a0a0a0" stroke-width="1" />
<text transform="translate(204,677) rotate(90)" font-size="11" fill="#222">700</text>
<line x1="214" y1="686.5" x2="218" y2="686.5" stroke="#a0a0a0" stroke-width="1" />
<line x1="214" y1="697.5" x2="218" y2="697.5" stroke="#a0a0a0" stroke-width="1" />
<line x1="214" y1="709.5" x2="218" y2="709.5" stroke="#a0a0a0" stroke-width="1" />
<line x1="214" y1="721.5" x2="218" y2="721.5" stroke="#a0a0a0" stroke-width="1" />
<line x1="214" y1="732.5" x2="218" y2="732.5" stroke="#a0a0a0" stroke-width="1" />
<line x1="201" y1="744.5" x2="219" y2="744.5" stroke="#a0a0a0" stroke-width="1" />
<text transform="translate(204,747) rotate(90)" font-size="11" fill="#222">800</text>
<line x1="214" y1="756.5" x2="218" y2="756.5" stroke="#a0a0a0" stroke-width="1" />
<line x1="201" y1="640.5" x2="219" y2="640.5" stroke="#e81010" stroke-width="1" />
<rect x="310" y="184" width="789" height="559" fill="#a0a0a0" filter="url(#sh)" opacity="0.9"/>
<rect x="309" y="183" width="788" height="558" fill="#fff" />
<path d="M345.5 184V740 M415.5 184V740 M485.5 184V740 M555.5 184V740 M625.5 184V740 M695.5 184V740 M765.5 184V740 M835.5 184V740 M905.5 184V740 M975.5 184V740 M1045.5 184V740 M310 219.5H1096 M310 289.5H1096 M310 359.5H1096 M310 429.5H1096 M310 499.5H1096 M310 569.5H1096 M310 639.5H1096 M310 709.5H1096" stroke="#e6e6e6" stroke-width="1"/>
<path d="M380.5 184V740 M450.5 184V740 M520.5 184V740 M590.5 184V740 M660.5 184V740 M730.5 184V740 M800.5 184V740 M870.5 184V740 M940.5 184V740 M1010.5 184V740 M1080.5 184V740 M310 254.5H1096 M310 324.5H1096 M310 394.5H1096 M310 464.5H1096 M310 534.5H1096 M310 604.5H1096 M310 674.5H1096" stroke="#d4d4d4" stroke-width="1"/>
<rect x="309.5" y="183.5" width="787" height="557" fill="none" stroke="#6e6e6e" stroke-width="1" />
<path d="M351 320 a94 94 0 1 0 188 0 a94 94 0 1 0 -188 0z M419.7 334.8 a38.3 38.3 0 1 0 76.6 0 a38.3 38.3 0 1 0 -76.6 0z" fill="#8fbbea" stroke="#4a7cba" stroke-width="1" fill-rule="evenodd"/>
<path d="M585.00 289.00L590.25 290.02L595.50 291.01L600.75 291.95L606.00 292.82L611.25 293.60L616.50 294.26L621.75 294.79L627.00 295.18L632.25 295.42L637.50 295.50L642.75 295.42L648.00 295.18L653.25 294.79L658.50 294.26L663.75 293.60L669.00 292.82L674.25 291.95L679.50 291.01L684.75 290.02L690.00 289.00L695.25 287.98L700.50 286.99L705.75 286.05L711.00 285.18L716.25 284.40L721.50 283.74L726.75 283.21L732.00 282.82L737.25 282.58L742.50 282.50L747.75 282.58L753.00 282.82L758.25 283.21L763.50 283.74L768.75 284.40L774.00 285.18L779.25 286.05L784.50 286.99L789.75 287.98L795.00 289.00L795.00 289.00L794.03 291.64L793.08 294.27L792.19 296.91L791.36 299.55L790.62 302.19L789.98 304.82L789.48 307.46L789.10 310.10L788.88 312.74L788.80 315.38L788.88 318.01L789.10 320.65L789.48 323.29L789.98 325.93L790.62 328.56L791.36 331.20L792.19 333.84L793.08 336.48L794.03 339.11L795.00 341.75L795.97 344.39L796.92 347.02L797.81 349.66L798.64 352.30L799.38 354.94L800.02 357.57L800.52 360.21L800.90 362.85L801.12 365.49L801.20 368.12L801.12 370.76L800.90 373.40L800.52 376.04L800.02 378.68L799.38 381.31L798.64 383.95L797.81 386.59L796.92 389.23L795.97 391.86L795.00 394.50L795.00 394.50L789.75 393.48L784.50 392.49L779.25 391.55L774.00 390.68L768.75 389.90L763.50 389.24L758.25 388.71L753.00 388.32L747.75 388.08L742.50 388.00L737.25 388.08L732.00 388.32L726.75 388.71L721.50 389.24L716.25 389.90L711.00 390.68L705.75 391.55L700.50 392.49L695.25 393.48L690.00 394.50L684.75 395.52L679.50 396.51L674.25 397.45L669.00 398.32L663.75 399.10L658.50 399.76L653.25 400.29L648.00 400.68L642.75 400.92L637.50 401.00L632.25 400.92L627.00 400.68L621.75 400.29L616.50 399.76L611.25 399.10L606.00 398.32L600.75 397.45L595.50 396.51L590.25 395.52L585.00 394.50L585.00 394.50L585.97 391.86L586.92 389.23L587.81 386.59L588.64 383.95L589.38 381.31L590.02 378.68L590.52 376.04L590.90 373.40L591.12 370.76L591.20 368.12L591.12 365.49L590.90 362.85L590.52 360.21L590.02 357.57L589.38 354.94L588.64 352.30L587.81 349.66L586.92 347.02L585.97 344.39L585.00 341.75L584.03 339.11L583.08 336.48L582.19 333.84L581.36 331.20L580.62 328.56L579.98 325.93L579.48 323.29L579.10 320.65L578.88 318.01L578.80 315.38L578.88 312.74L579.10 310.10L579.48 307.46L579.98 304.82L580.62 302.19L581.36 299.55L582.19 296.91L583.08 294.27L584.03 291.64L585.00 289.00z" fill="#8fbbea" stroke="#4a7cba" stroke-width="1"/>
<path d="M852.20 289.00L856.58 289.97L860.95 290.92L865.33 291.81L869.70 292.64L874.08 293.38L878.45 294.02L882.83 294.52L887.20 294.90L891.58 295.12L895.95 295.20L900.33 295.12L904.70 294.90L909.08 294.52L913.45 294.02L917.83 293.38L922.20 292.64L926.58 291.81L930.95 290.92L935.33 289.97L939.70 289.00L944.08 288.03L948.45 287.08L952.83 286.19L957.20 285.36L961.58 284.62L965.95 283.98L970.33 283.48L974.70 283.10L979.08 282.88L983.45 282.80L987.83 282.88L992.20 283.10L996.58 283.48L1000.95 283.98L1005.33 284.62L1009.70 285.36L1014.08 286.19L1018.45 287.08L1022.83 288.03L1027.20 289.00L1027.20 289.00L1026.20 291.64L1025.22 294.27L1024.29 296.91L1023.44 299.55L1022.67 302.19L1022.02 304.82L1021.50 307.46L1021.11 310.10L1020.88 312.74L1020.80 315.38L1020.88 318.01L1021.11 320.65L1021.50 323.29L1022.02 325.93L1022.67 328.56L1023.44 331.20L1024.29 333.84L1025.22 336.48L1026.20 339.11L1027.20 341.75L1028.20 344.39L1029.18 347.02L1030.11 349.66L1030.96 352.30L1031.73 354.94L1032.38 357.57L1032.90 360.21L1033.29 362.85L1033.52 365.49L1033.60 368.12L1033.52 370.76L1033.29 373.40L1032.90 376.04L1032.38 378.68L1031.73 381.31L1030.96 383.95L1030.11 386.59L1029.18 389.23L1028.20 391.86L1027.20 394.50L1027.20 394.50L1022.83 393.53L1018.45 392.58L1014.08 391.69L1009.70 390.86L1005.33 390.12L1000.95 389.48L996.58 388.98L992.20 388.60L987.83 388.38L983.45 388.30L979.08 388.38L974.70 388.60L970.33 388.98L965.95 389.48L961.58 390.12L957.20 390.86L952.83 391.69L948.45 392.58L944.08 393.53L939.70 394.50L935.33 395.47L930.95 396.42L926.58 397.31L922.20 398.14L917.83 398.88L913.45 399.52L909.08 400.02L904.70 400.40L900.33 400.62L895.95 400.70L891.58 400.62L887.20 400.40L882.83 400.02L878.45 399.52L874.08 398.88L869.70 398.14L865.33 397.31L860.95 396.42L856.58 395.47L852.20 394.50" fill="none" stroke="#4a7cba" stroke-width="1.1"/>
<path d="M852.20 289.00L851.23 291.03L850.28 293.06L849.39 295.10L848.56 297.13L847.82 299.16L847.18 301.19L846.68 303.23L846.30 305.26L846.08 307.29L846.00 309.32L846.08 311.36L846.30 313.39L846.68 315.42L847.18 317.45L847.82 319.49L848.56 321.52L849.39 323.55L850.28 325.58L851.23 327.62L852.20 329.65L853.17 331.68L854.12 333.71L855.01 335.75L855.84 337.78L856.58 339.81L857.22 341.84L857.72 343.88L858.10 345.91L858.32 347.94L858.40 349.98L858.32 352.01L858.10 354.04L857.72 356.07L857.22 358.11L856.58 360.14L855.84 362.17L855.01 364.20L854.12 366.24L853.17 368.27L852.20 370.30" fill="none" stroke="#4a7cba" stroke-width="1.1"/>
<path d="M424.45 475.57 A21.0 21.0 0 1 0 466.45 475.57 A105.0 105.0 0 0 1 499.66 488.52 A21.0 21.0 0 1 0 529.81 515.93 A105.0 105.0 0 0 1 548.35 557.55 A21.0 21.0 0 1 0 548.35 599.35 A105.0 105.0 0 0 1 529.62 641.22 A21.0 21.0 0 1 0 498.98 668.78 A105.0 105.0 0 0 1 466.45 681.33 A21.0 21.0 0 1 0 424.45 681.33 A105.0 105.0 0 0 1 388.27 666.51 A21.0 21.0 0 0 0 358.34 637.07 A105.0 105.0 0 0 1 342.52 599.22 A21.0 21.0 0 0 0 342.52 557.68 A105.0 105.0 0 0 1 358.17 520.07 A21.0 21.0 0 0 0 388.04 490.54 A105.0 105.0 0 0 1 424.45 475.57 Z M445.40 551.10 L453.17 562.67 L467.06 561.53 L462.85 574.82 L472.41 584.96 L459.39 589.96 L457.42 603.76 L445.40 596.70 L433.38 603.76 L431.41 589.96 L418.39 584.96 L427.95 574.82 L423.74 561.53 L437.63 562.67Z" fill="#8fbbea" stroke="#4a7cba" stroke-width="1" fill-rule="evenodd"/>
<path d="M585.5 569 C690.5 639.5 690.5 548 795.5 569 C783.3 708.1 602 705.9 585.5 569z" fill="#8fbbea" stroke="#4a7cba" stroke-width="1"/>
<path d="M940.4 493.3 C972.86 493.3 999.6 544.8 1010.5 605.6 A70.1 69 0 0 1 870.3 605.6 C881.2 544.8 907.94 493.3 940.4 493.3z" fill="#8fbbea" stroke="#4a7cba" stroke-width="1"/>
<rect x="937.6" y="265.3" width="6" height="6" fill="#20dd20" stroke="#7a7a7a" stroke-width="1.3"/>
<path d="M939.1 266.8 l3 3 M942.1 266.8 l-3 3" stroke="#3a9a3a" stroke-width="0.6"/>
<rect x="937.6" y="307.3" width="6" height="6" fill="#20dd20" stroke="#7a7a7a" stroke-width="1.3"/>
<path d="M939.1 308.8 l3 3 M942.1 308.8 l-3 3" stroke="#3a9a3a" stroke-width="0.6"/>
<rect x="828.5" y="330.2" width="6" height="6" fill="#20dd20" stroke="#7a7a7a" stroke-width="1.3"/>
<path d="M830.0 331.7 l3 3 M833.0 331.7 l-3 3" stroke="#3a9a3a" stroke-width="0.6"/>
<rect x="870.5" y="330.2" width="6" height="6" fill="#20dd20" stroke="#7a7a7a" stroke-width="1.3"/>
<path d="M872.0 331.7 l3 3 M875.0 331.7 l-3 3" stroke="#3a9a3a" stroke-width="0.6"/>
<rect x="1003.5" y="338.5" width="6" height="6" fill="#20dd20" stroke="#7a7a7a" stroke-width="1.3"/>
<path d="M1005.0 340.0 l3 3 M1008.0 340.0 l-3 3" stroke="#3a9a3a" stroke-width="0.6"/>
<rect x="1045.5" y="338.5" width="6" height="6" fill="#20dd20" stroke="#7a7a7a" stroke-width="1.3"/>
<path d="M1047.0 340.0 l3 3 M1050.0 340.0 l-3 3" stroke="#3a9a3a" stroke-width="0.6"/>
<rect x="937.6" y="370.3" width="6" height="6" fill="#20dd20" stroke="#7a7a7a" stroke-width="1.3"/>
<path d="M939.1 371.8 l3 3 M942.1 371.8 l-3 3" stroke="#3a9a3a" stroke-width="0.6"/>
<rect x="937.6" y="412.5" width="6" height="6" fill="#20dd20" stroke="#7a7a7a" stroke-width="1.3"/>
<path d="M939.1 414.0 l3 3 M942.1 414.0 l-3 3" stroke="#3a9a3a" stroke-width="0.6"/>
<path d="M852.2 285.7 L855.5 289 L852.2 292.3 L848.9000000000001 289z" fill="#14e614" stroke="#222" stroke-width="0.8"/>
<path d="M1027.2 285.7 L1030.5 289 L1027.2 292.3 L1023.9000000000001 289z" fill="#14e614" stroke="#222" stroke-width="0.8"/>
<path d="M852.2 391.2 L855.5 394.5 L852.2 397.8 L848.9000000000001 394.5z" fill="#14e614" stroke="#222" stroke-width="0.8"/>
<path d="M1027.2 391.2 L1030.5 394.5 L1027.2 397.8 L1023.9000000000001 394.5z" fill="#14e614" stroke="#222" stroke-width="0.8"/>
<path d="M852.3 367 L855.5 370.3 L852.3 373.6 L849 370.3z" fill="#14e614"/>
<path d="M852.3 365.8 V374.8 M847.8 370.3 H856.8" stroke="#111" stroke-width="1.1"/>
<path d="M852.3 365.3 l-1.8 2 h3.6z M852.3 375.3 l-1.8 -2 h3.6z M847.3 370.3 l2 -1.8 v3.6z M857.3 370.3 l-2 -1.8 v3.6z" fill="#111"/>
<rect x="687.5" y="545" width="6" height="6" fill="#20dd20" stroke="#7a7a7a" stroke-width="1.3"/>
<path d="M689.0 546.5 l3 3 M692.0 546.5 l-3 3" stroke="#3a9a3a" stroke-width="0.6"/>
<rect x="687.5" y="636.5" width="6" height="6" fill="#20dd20" stroke="#7a7a7a" stroke-width="1.3"/>
<path d="M689.0 638.0 l3 3 M692.0 638.0 l-3 3" stroke="#3a9a3a" stroke-width="0.6"/>
<rect x="687.5" y="671" width="6" height="6" fill="#20dd20" stroke="#7a7a7a" stroke-width="1.3"/>
<path d="M689.0 672.5 l3 3 M692.0 672.5 l-3 3" stroke="#3a9a3a" stroke-width="0.6"/>
<path d="M585.6 565.7 L588.9 569 L585.6 572.3 L582.3000000000001 569z" fill="#14e614" stroke="#222" stroke-width="0.8"/>
<path d="M795.3 565.7 L798.5999999999999 569 L795.3 572.3 L792.0 569z" fill="#14e614" stroke="#222" stroke-width="0.8"/>
<rect x="852.5" y="394.5" width="90" height="18" fill="#ffffe1" stroke="#767676" stroke-width="1" />
<text x="855.5" y="406.5" font-size="11" fill="#000" >Extend Geometry</text>
<rect x="689.5" y="661.5" width="145" height="17" fill="#ffffe1" stroke="#767676" stroke-width="1" />
<text x="692.5" y="674.2" font-size="11" fill="#000" >Modify Second Control Point</text>
<rect x="197" y="757" width="990" height="24" fill="#efefef" />
<rect x="203.5" y="759.5" width="41" height="18" fill="#efefef" stroke="#3d98f5" stroke-width="1" />
<text x="206.3" y="772" font-size="11" fill="#222" >Page-1</text>
<text x="256" y="772" font-size="11" fill="#222" >All</text>
<path d="M272.5 771 L276.25 767 L280 771z" fill="#111"/>
<circle cx="299.8" cy="768.9" r="8" fill="#4ca57a"/>
<path d="M299.8 764 V773.8 M294.9 768.9 H304.7" stroke="#fff" stroke-width="2.2"/>
<text x="314" y="772" font-size="11" fill="#222" >Add</text>
<rect x="1" y="149" width="196" height="632" fill="#f0f0f0" />
<rect x="1" y="149" width="196" height="28" fill="#f9f9f9" />
<rect x="8.2" y="155" width="12.7" height="15.8" fill="#2f6db6"/><rect x="11.4" y="157.3" width="6.3" height="3.4" rx="0.6" fill="#fff"/><rect x="12.4" y="158.3" width="4.3" height="1.4" fill="#5a8ac8"/>
<path d="M38.4 169.3 H31 V155.8 H37.6 L41.3 159.6 V162.5" fill="none" stroke="#2f6db6" stroke-width="1.2"/><path d="M37.2 155.8 V159.9 H41.3" fill="none" stroke="#2f6db6" stroke-width="0.9"/><path d="M37.3 166.9 H44.8 M41 163.2 V170.7" stroke="#2f6db6" stroke-width="1.9"/>
<path d="M52 170.3 V158.8 H56.2 L56.8 160.6 H63.4 V164.3" fill="none" stroke="#2f6db6" stroke-width="1.2"/><path d="M52 170.3 L54.6 164.9 H66.6 L63.8 170.3z" fill="none" stroke="#2f6db6" stroke-width="1.2"/><path d="M59.4 158.6 V155.8 H64.2 L66.3 157.8" fill="none" stroke="#2f6db6" stroke-width="1.2"/><path d="M67.2 158.6 L67 155.9 L64.5 157.9z" fill="#2f6db6"/>
<path d="M74.7 156.6 H87.3 V169.1 H77.6 L74.7 166.2z" fill="none" stroke="#2f6db6" stroke-width="1.2"/><path d="M77.6 156.6 V163.2 H84.3 V156.6" fill="none" stroke="#2f6db6" stroke-width="1.1"/><path d="M79.2 165.5 H82.9" stroke="#2f6db6" stroke-width="0.9"/>
<path d="M101.7 169.2 H95.8 V155.7 H102.6 L106.2 159.3 V163.3" fill="none" stroke="#2f6db6" stroke-width="1.2"/><path d="M102.3 155.7 V159.4 H106.2" fill="none" stroke="#2f6db6" stroke-width="0.9"/><path d="M103.5 164.4 L109.6 170.3 M109.6 164.4 L103.5 170.3" stroke="#2f6db6" stroke-width="2.1"/>
<line x1="114.5" y1="152" x2="114.5" y2="174" stroke="#cfcfcf" stroke-width="1" />
<rect x="116.5" y="152.5" width="22" height="22" fill="#f8f8f8" stroke="#4a9bea" stroke-width="1" />
<path d="M121.5 158.5 h4 v4 h-4z M121.5 165.5 h4 v4 h-4z" fill="none" stroke="#2f6db6" stroke-width="1"/><path d="M127.5 159.5 h5 M127.5 161.5 h5 M127.5 166.5 h5 M127.5 168.5 h5" stroke="#2f6db6" stroke-width="1"/>
<path d="M142.5 157.5 h1.5 M142.5 161.5 h1.5 M142.5 165.5 h1.5 M142.5 169.5 h1.5 M146 157.5 h9 M146 161.5 h9 M146 165.5 h9 M146 169.5 h9" stroke="#2f6db6" stroke-width="1.1"/>
<path d="M166.5 157.5 h9 v9 h-9z M166 168.5 h10.5" fill="none" stroke="#2f6db6" stroke-width="1.1"/>
<line x1="182.5" y1="152" x2="182.5" y2="174" stroke="#cfcfcf" stroke-width="1" />
<rect x="1.5" y="177.5" width="195" height="412" fill="#fff" stroke="#a8a8a8" stroke-width="1" />
<rect x="181" y="178" width="15" height="411" fill="#f0f0f0" />
<rect x="181" y="260" width="14" height="63" fill="#cdcdcd" />
<path d="M184.6 188.2 l3.8 -3.6 3.8 3.6" fill="none" stroke="#555" stroke-width="2.3"/>
<path d="M184.6 578.5 l3.8 3.6 3.8 -3.6" fill="none" stroke="#555" stroke-width="2.3"/>
<g clip-path="url(#listclip)">
<rect x="12.5" y="457.5" width="142" height="47" fill="#c8e2fb" stroke="#4aa0ee" stroke-width="1" />
<polygon points="48.20,215.50 41.10,227.18 26.90,227.18 19.80,215.50 26.90,203.82 41.10,203.82" fill="#8fbbea" stroke="#4a7cba" stroke-width="1"/>
<polygon points="34.00,255.30 45.02,260.61 47.75,272.54 40.12,282.10 27.88,282.10 20.25,272.54 22.98,260.61" fill="#8fbbea" stroke="#4a7cba" stroke-width="1"/>
<polygon points="39.59,308.31 47.49,316.21 47.49,327.39 39.59,335.29 28.41,335.29 20.51,327.39 20.51,316.21 28.41,308.31" fill="#8fbbea" stroke="#4a7cba" stroke-width="1"/>
<polygon points="34.45,361.20 37.98,370.95 48.34,371.29 40.16,377.65 43.03,387.61 34.45,381.80 25.87,387.61 28.74,377.65 20.56,371.29 30.92,370.95" fill="#8fbbea" stroke="#4a7cba" stroke-width="1"/>
<polygon points="34.30,414.30 39.00,422.73 48.47,424.60 41.91,431.67 43.06,441.25 34.30,437.20 25.54,441.25 26.69,431.67 20.13,424.60 29.60,422.73" fill="#8fbbea" stroke="#4a7cba" stroke-width="1"/>
<polygon points="34.20,467.05 38.24,472.92 45.34,472.42 43.27,479.23 48.09,484.47 41.47,487.10 40.38,494.14 34.20,490.60 28.02,494.14 26.93,487.10 20.31,484.47 25.13,479.23 23.06,472.42 30.16,472.92" fill="#8fbbea" stroke="#4a7cba" stroke-width="1"/>
<polygon points="34.20,520.10 37.99,524.85 44.03,524.17 43.35,530.21 48.10,534.00 43.35,537.79 44.03,543.83 37.99,543.15 34.20,547.90 30.41,543.15 24.37,543.83 25.05,537.79 20.30,534.00 25.05,530.21 24.37,524.17 30.41,524.85" fill="#8fbbea" stroke="#4a7cba" stroke-width="1"/>
<path d="M20.5 577 V600 H44z" fill="#8fbbea" stroke="#4a7cba"/>
<text x="53" y="220" font-size="11" fill="#222" >Hexagon</text>
<text x="53" y="273" font-size="11" fill="#222" >Heptagon</text>
<text x="53" y="326" font-size="11" fill="#222" >Octagon</text>
<text x="53" y="379" font-size="11" fill="#222" >Pentagram</text>
<text x="53" y="432" font-size="11" fill="#222" >Hexagram</text>
<text x="53" y="485" font-size="11" fill="#222" >Heptagram</text>
<text x="53" y="538" font-size="11" fill="#222" >Octagram</text>
<text x="53" y="591" font-size="11" fill="#222" >Right Triangle</text>
</g>
<rect x="1.5" y="589.5" width="195" height="6" fill="#fff" stroke="#a0a0a0" stroke-width="1" />
<line x1="1" y1="589.8" x2="197" y2="589.8" stroke="#8c8c8c" stroke-width="1.6" />
<path d="M22 607.5 h-5.5 q-2 0 -2 2 v8 q0 2 2 2 h8 q2 0 2 -2 v-3" fill="none" stroke="#3a82b0" stroke-width="1.3"/><path d="M19 616 l1 -3 7.5 -7.5 2 2 -7.5 7.5z" fill="none" stroke="#3a82b0" stroke-width="1.2"/>
<path d="M45.9 621 V610" stroke="#30609c" stroke-width="1.8"/><path d="M40.9 613.5 l5 -8.5 5 8.5 -5 -1.5z" fill="#30609c"/>
<rect x="59.5" y="602.5" width="21" height="21" fill="#f0f0f0" stroke="#3d98f5" stroke-width="1" />
<circle cx="71.9" cy="611.6" r="5.1" fill="#30609c"/><rect x="63" y="611" width="8.5" height="8" fill="#6aa6e6"/>
<path d="M95.5 604.5 l-7 9.5 h4.2 l-2.7 7.5 8 -9.8 h-4.2z" fill="#ff3a10"/>
<path d="M110.8 614.5 V610 q0 -3 3 -3.5" fill="none" stroke="#5aa0e8" stroke-width="1.8"/><path d="M112 604.8 l3.8 1.8 -3 2.6z" fill="#5aa0e8"/>
<path d="M116.5 605.8 h4.5 q2.5 0 3.2 2.2" fill="none" stroke="#808080" stroke-width="1.6"/><path d="M122 608.5 l3.8 -0.5 -1.4 3.5z" fill="#808080"/>
<path d="M124.3 610.5 V615 q0 3 -3 3.5" fill="none" stroke="#2f6db6" stroke-width="1.8"/><path d="M123 620.2 l-3.8 -1.8 3 -2.6z" fill="#2f6db6"/>
<path d="M119 619.2 h-4.5 q-2.5 0 -3.2 -2.2" fill="none" stroke="#555" stroke-width="1.6"/><path d="M113.5 616.5 l-3.8 0.5 1.4 -3.5z" fill="#555"/>
<ellipse cx="142" cy="612" rx="7.6" ry="6" fill="#bfe0f6" stroke="#4a90c8" stroke-width="1"/><path d="M137 617 l-0.5 3 3.5 -2z" fill="#bfe0f6" stroke="#4a90c8" stroke-width="0.8"/>
<path d="M138 610.1 h8 M137.5 612.2 h9 M138 614.3 h8" stroke="#2a78b0" stroke-width="1.1"/>
<path d="M160 607 V613.3 H172 V618.5" fill="none" stroke="#555" stroke-width="1.6"/><rect x="158.2" y="605.3" width="3.6" height="3.6" fill="#2f5f9c"/><rect x="170" y="617" width="4" height="3.6" fill="#2f5f9c"/>
<path d="M184 612 h6.2 l-3.1 3.4z" fill="#111"/><rect x="184" y="610" width="6.2" height="1" fill="#111"/>
<rect x="1" y="630" width="196" height="6" fill="#e6e6e6" />
<rect x="1" y="637" width="196" height="3" fill="#ff0000" />
<rect x="1" y="640" width="196" height="130" fill="#e2e2e2" />
<rect x="11" y="643" width="176" height="123.5" fill="#fff" />
<g transform="translate(11,643) scale(0.2239) translate(-310,-184)">
<path d="M351 320 a94 94 0 1 0 188 0 a94 94 0 1 0 -188 0z M419.7 334.8 a38.3 38.3 0 1 0 76.6 0 a38.3 38.3 0 1 0 -76.6 0z" fill="#8fbbea" stroke="#4a7cba" vector-effect="non-scaling-stroke" stroke-width="1" fill-rule="evenodd"/>
<path d="M585.00 289.00L590.25 290.02L595.50 291.01L600.75 291.95L606.00 292.82L611.25 293.60L616.50 294.26L621.75 294.79L627.00 295.18L632.25 295.42L637.50 295.50L642.75 295.42L648.00 295.18L653.25 294.79L658.50 294.26L663.75 293.60L669.00 292.82L674.25 291.95L679.50 291.01L684.75 290.02L690.00 289.00L695.25 287.98L700.50 286.99L705.75 286.05L711.00 285.18L716.25 284.40L721.50 283.74L726.75 283.21L732.00 282.82L737.25 282.58L742.50 282.50L747.75 282.58L753.00 282.82L758.25 283.21L763.50 283.74L768.75 284.40L774.00 285.18L779.25 286.05L784.50 286.99L789.75 287.98L795.00 289.00L795.00 289.00L794.03 291.64L793.08 294.27L792.19 296.91L791.36 299.55L790.62 302.19L789.98 304.82L789.48 307.46L789.10 310.10L788.88 312.74L788.80 315.38L788.88 318.01L789.10 320.65L789.48 323.29L789.98 325.93L790.62 328.56L791.36 331.20L792.19 333.84L793.08 336.48L794.03 339.11L795.00 341.75L795.97 344.39L796.92 347.02L797.81 349.66L798.64 352.30L799.38 354.94L800.02 357.57L800.52 360.21L800.90 362.85L801.12 365.49L801.20 368.12L801.12 370.76L800.90 373.40L800.52 376.04L800.02 378.68L799.38 381.31L798.64 383.95L797.81 386.59L796.92 389.23L795.97 391.86L795.00 394.50L795.00 394.50L789.75 393.48L784.50 392.49L779.25 391.55L774.00 390.68L768.75 389.90L763.50 389.24L758.25 388.71L753.00 388.32L747.75 388.08L742.50 388.00L737.25 388.08L732.00 388.32L726.75 388.71L721.50 389.24L716.25 389.90L711.00 390.68L705.75 391.55L700.50 392.49L695.25 393.48L690.00 394.50L684.75 395.52L679.50 396.51L674.25 397.45L669.00 398.32L663.75 399.10L658.50 399.76L653.25 400.29L648.00 400.68L642.75 400.92L637.50 401.00L632.25 400.92L627.00 400.68L621.75 400.29L616.50 399.76L611.25 399.10L606.00 398.32L600.75 397.45L595.50 396.51L590.25 395.52L585.00 394.50L585.00 394.50L585.97 391.86L586.92 389.23L587.81 386.59L588.64 383.95L589.38 381.31L590.02 378.68L590.52 376.04L590.90 373.40L591.12 370.76L591.20 368.12L591.12 365.49L590.90 362.85L590.52 360.21L590.02 357.57L589.38 354.94L588.64 352.30L587.81 349.66L586.92 347.02L585.97 344.39L585.00 341.75L584.03 339.11L583.08 336.48L582.19 333.84L581.36 331.20L580.62 328.56L579.98 325.93L579.48 323.29L579.10 320.65L578.88 318.01L578.80 315.38L578.88 312.74L579.10 310.10L579.48 307.46L579.98 304.82L580.62 302.19L581.36 299.55L582.19 296.91L583.08 294.27L584.03 291.64L585.00 289.00z" fill="#8fbbea" stroke="#4a7cba" vector-effect="non-scaling-stroke" stroke-width="1"/>
<path d="M852.20 289.00L856.58 289.97L860.95 290.92L865.33 291.81L869.70 292.64L874.08 293.38L878.45 294.02L882.83 294.52L887.20 294.90L891.58 295.12L895.95 295.20L900.33 295.12L904.70 294.90L909.08 294.52L913.45 294.02L917.83 293.38L922.20 292.64L926.58 291.81L930.95 290.92L935.33 289.97L939.70 289.00L944.08 288.03L948.45 287.08L952.83 286.19L957.20 285.36L961.58 284.62L965.95 283.98L970.33 283.48L974.70 283.10L979.08 282.88L983.45 282.80L987.83 282.88L992.20 283.10L996.58 283.48L1000.95 283.98L1005.33 284.62L1009.70 285.36L1014.08 286.19L1018.45 287.08L1022.83 288.03L1027.20 289.00L1027.20 289.00L1026.20 291.64L1025.22 294.27L1024.29 296.91L1023.44 299.55L1022.67 302.19L1022.02 304.82L1021.50 307.46L1021.11 310.10L1020.88 312.74L1020.80 315.38L1020.88 318.01L1021.11 320.65L1021.50 323.29L1022.02 325.93L1022.67 328.56L1023.44 331.20L1024.29 333.84L1025.22 336.48L1026.20 339.11L1027.20 341.75L1028.20 344.39L1029.18 347.02L1030.11 349.66L1030.96 352.30L1031.73 354.94L1032.38 357.57L1032.90 360.21L1033.29 362.85L1033.52 365.49L1033.60 368.12L1033.52 370.76L1033.29 373.40L1032.90 376.04L1032.38 378.68L1031.73 381.31L1030.96 383.95L1030.11 386.59L1029.18 389.23L1028.20 391.86L1027.20 394.50L1027.20 394.50L1022.83 393.53L1018.45 392.58L1014.08 391.69L1009.70 390.86L1005.33 390.12L1000.95 389.48L996.58 388.98L992.20 388.60L987.83 388.38L983.45 388.30L979.08 388.38L974.70 388.60L970.33 388.98L965.95 389.48L961.58 390.12L957.20 390.86L952.83 391.69L948.45 392.58L944.08 393.53L939.70 394.50L935.33 395.47L930.95 396.42L926.58 397.31L922.20 398.14L917.83 398.88L913.45 399.52L909.08 400.02L904.70 400.40L900.33 400.62L895.95 400.70L891.58 400.62L887.20 400.40L882.83 400.02L878.45 399.52L874.08 398.88L869.70 398.14L865.33 397.31L860.95 396.42L856.58 395.47L852.20 394.50L852.20 394.50L853.17 391.86L854.12 389.23L855.01 386.59L855.84 383.95L856.58 381.31L857.22 378.68L857.72 376.04L858.10 373.40L858.32 370.76L858.40 368.12L858.32 365.49L858.10 362.85L857.72 360.21L857.22 357.57L856.58 354.94L855.84 352.30L855.01 349.66L854.12 347.02L853.17 344.39L852.20 341.75L851.23 339.11L850.28 336.48L849.39 333.84L848.56 331.20L847.82 328.56L847.18 325.93L846.68 323.29L846.30 320.65L846.08 318.01L846.00 315.38L846.08 312.74L846.30 310.10L846.68 307.46L847.18 304.82L847.82 302.19L848.56 299.55L849.39 296.91L850.28 294.27L851.23 291.64L852.20 289.00z" fill="none" stroke="#4a7cba" vector-effect="non-scaling-stroke" stroke-width="1.1"/>
<path d="M424.45 475.57 A21.0 21.0 0 1 0 466.45 475.57 A105.0 105.0 0 0 1 499.66 488.52 A21.0 21.0 0 1 0 529.81 515.93 A105.0 105.0 0 0 1 548.35 557.55 A21.0 21.0 0 1 0 548.35 599.35 A105.0 105.0 0 0 1 529.62 641.22 A21.0 21.0 0 1 0 498.98 668.78 A105.0 105.0 0 0 1 466.45 681.33 A21.0 21.0 0 1 0 424.45 681.33 A105.0 105.0 0 0 1 388.27 666.51 A21.0 21.0 0 0 0 358.34 637.07 A105.0 105.0 0 0 1 342.52 599.22 A21.0 21.0 0 0 0 342.52 557.68 A105.0 105.0 0 0 1 358.17 520.07 A21.0 21.0 0 0 0 388.04 490.54 A105.0 105.0 0 0 1 424.45 475.57 Z M445.40 551.10 L453.17 562.67 L467.06 561.53 L462.85 574.82 L472.41 584.96 L459.39 589.96 L457.42 603.76 L445.40 596.70 L433.38 603.76 L431.41 589.96 L418.39 584.96 L427.95 574.82 L423.74 561.53 L437.63 562.67Z" fill="#8fbbea" stroke="#4a7cba" vector-effect="non-scaling-stroke" stroke-width="1" fill-rule="evenodd"/>
<path d="M585.5 569 C690.5 639.5 690.5 548 795.5 569 C783.3 708.1 602 705.9 585.5 569z" fill="#8fbbea" stroke="#4a7cba" vector-effect="non-scaling-stroke" stroke-width="1"/>
<path d="M940.4 493.3 C972.86 493.3 999.6 544.8 1010.5 605.6 A70.1 69 0 0 1 870.3 605.6 C881.2 544.8 907.94 493.3 940.4 493.3z" fill="#8fbbea" stroke="#4a7cba" vector-effect="non-scaling-stroke" stroke-width="1"/>
</g>
<rect x="1" y="770" width="196" height="3" fill="#ff0000" />
<rect x="1" y="773" width="196" height="8" fill="#e6e6e6" />
<rect x="1" y="781" width="1186" height="31" fill="#fafafa" />
<text x="11.1" y="800" font-size="11" fill="#222" >PAGE 1 OF 1</text>
<line x1="85.5" y1="785" x2="85.5" y2="808" stroke="#cfcfcf" stroke-width="1" />
<text x="93.4" y="800" font-size="11" fill="#222" >MOUSE X: 544.12 dip, Y: 651.14 dip</text>
<line x1="279.5" y1="785" x2="279.5" y2="808" stroke="#cfcfcf" stroke-width="1" />
<text x="287.3" y="800" font-size="11" fill="#222" >SHAPE WIDTH: 300.00 dip, HEIGHT: 158.66 dip, ANGLE: 0.00 deg</text>
<text x="927.2" y="800" font-size="11" fill="#222" >70%</text>
<circle cx="973.5" cy="795.5" r="6.3" fill="none" stroke="#666" stroke-width="1.1"/><path d="M969.5 795.5 h8" stroke="#2f6db6" stroke-width="1.3"/>
<rect x="996.5" y="792.5" width="153" height="3" fill="#e6e6e6" stroke="#d6d6d6" stroke-width="1" />
<path d="M1042.5 784.5 h10 v14 l-5 4.5 -5 -4.5z" fill="#e8e8e8" stroke="#9a9a9a" stroke-width="1"/>
<line x1="996.5" y1="803" x2="996.5" y2="809" stroke="#9a9a9a" stroke-width="1" />
<line x1="1073.5" y1="803" x2="1073.5" y2="809" stroke="#9a9a9a" stroke-width="1" />
<line x1="1150.5" y1="803" x2="1150.5" y2="809" stroke="#9a9a9a" stroke-width="1" />
<circle cx="1171" cy="795.5" r="6.3" fill="none" stroke="#666" stroke-width="1.1"/><path d="M1167 795.5 h8 M1171 791.5 v8" stroke="#2f6db6" stroke-width="1.3"/>
<rect x="0.5" y="0.5" width="1187" height="812" fill="none" stroke="#1a78d2" stroke-width="1" />
</svg>
</body></html>
